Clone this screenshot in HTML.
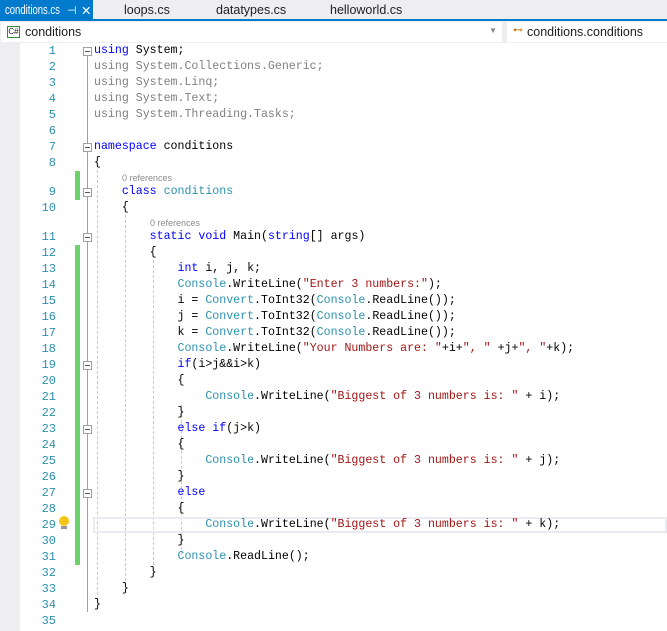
<!DOCTYPE html>
<html><head><style>
*{margin:0;padding:0;box-sizing:border-box}
body{width:667px;height:631px;overflow:hidden;background:#fff;position:relative;font-family:"Liberation Sans",sans-serif}
.tabs{position:absolute;left:0;top:0;width:667px;height:20px;background:#eeeef2;font-size:12.5px;color:#1e1e1e}
.tabs span{position:absolute;top:3px}
.tabbar{position:absolute;left:0;top:19px;width:667px;height:2px;background:#007acc}
.nav{position:absolute;left:0;top:21px;width:667px;height:22px;background:#eeeef2}
.box{position:absolute;top:1px;height:20px;background:#fff;font-size:12.5px;color:#1e1e1e;padding:3px 0 0 24px}
.gut{position:absolute;left:0;top:43px;width:20px;height:588px;background:#eeeef2}
.ln{position:absolute;left:20px;width:36px;text-align:right;font-family:"Liberation Mono",monospace;font-size:12px;color:#2b91af;line-height:16px}
.c{position:absolute;left:94px;white-space:pre;font-family:"Liberation Mono",monospace;font-size:11.6px;line-height:16px;color:#000}
.k{color:#0000ff}.t{color:#2b91af}.s{color:#a31515}.g{color:#808080}
.ref{position:absolute;font-size:9px;color:#8c8c8c;line-height:12px}
.gr{position:absolute;left:75px;width:5px;background:#6bd36b}
.fb{position:absolute;left:83px;width:9px;height:9px;border:1px solid #a0a0a0;background:#fff}
.fb:after{content:"";position:absolute;left:1px;top:3px;width:5px;height:1px;background:#555}
.guide{position:absolute;width:0;border-left:1px dashed #c8c8c8}
</style></head><body>
<div class="tabs">
<div style="position:absolute;left:0;top:0;width:93px;height:20px;background:#007acc"></div>
<span style="left:5px;color:#fff;transform:scaleX(0.76);transform-origin:0 0;white-space:nowrap">conditions.cs</span>
<span style="left:67px;color:#fff;font-size:11px;top:4px">⊣</span>
<span style="left:81px;color:#fff">✕</span>
<span style="left:124px">loops.cs</span>
<span style="left:216px">datatypes.cs</span>
<span style="left:330px">helloworld.cs</span>
</div>
<div class="tabbar"></div>
<div class="nav">
<div class="box" style="left:1px;width:501px"><span style="position:absolute;left:6px;top:4px;width:13px;height:12px;border:1px solid #388a34;font-size:8px;line-height:10px;text-align:center;color:#222">C#</span>conditions<span style="position:absolute;right:5px;top:4px;font-size:8px;color:#888">▼</span></div>
<div class="box" style="left:507px;width:160px;padding-left:20px"><span style="position:absolute;left:6px;top:3px;font-size:10px;color:#c27d0e">⊷</span>conditions.conditions</div>
</div>
<div class="gut"></div>

<div class="gr" style="top:171px;height:29px"></div>
<div class="gr" style="top:245px;height:320px"></div>
<div style="position:absolute;left:87px;top:52px;width:1px;height:560px;background:#a0a0a0"></div>
<div class="guide" style="left:97px;top:170px;height:430px"></div>
<div class="guide" style="left:125px;top:215px;height:366px"></div>
<div class="guide" style="left:153px;top:260px;height:305px"></div>
<div class="guide" style="left:181px;top:405px;height:150px"></div>
<div style="position:absolute;left:93px;top:517px;width:574px;height:16px;border:2px solid #eaeaf2"></div>
<div style="position:absolute;left:59px;top:516px;width:10px;height:10px;border-radius:50%;background:#f5c518"></div>
<div style="position:absolute;left:61px;top:526px;width:6px;height:3px;background:#999"></div>

<div class="fb" style="top:47px"></div><div class="fb" style="top:143px"></div><div class="fb" style="top:188px"></div><div class="fb" style="top:233px"></div><div class="fb" style="top:361px"></div><div class="fb" style="top:425px"></div><div class="fb" style="top:489px"></div>

<div class="ref" style="left:122px;top:172px">0 references</div>
<div class="ref" style="left:150px;top:217px">0 references</div>

<div class="ln" style="top:43px">1</div><div class="c" style="top:43px"><span class="k">using</span> System;</div>
<div class="ln" style="top:59px">2</div><div class="c g" style="top:59px">using System.Collections.Generic;</div>
<div class="ln" style="top:75px">3</div><div class="c g" style="top:75px">using System.Linq;</div>
<div class="ln" style="top:91px">4</div><div class="c g" style="top:91px">using System.Text;</div>
<div class="ln" style="top:107px">5</div><div class="c g" style="top:107px">using System.Threading.Tasks;</div>
<div class="ln" style="top:123px">6</div>
<div class="ln" style="top:139px">7</div><div class="c" style="top:139px"><span class="k">namespace</span> conditions</div>
<div class="ln" style="top:155px">8</div><div class="c" style="top:155px">{</div>
<div class="ln" style="top:184px">9</div><div class="c" style="top:184px">    <span class="k">class</span> <span class="t">conditions</span></div>
<div class="ln" style="top:200px">10</div><div class="c" style="top:200px">    {</div>
<div class="ln" style="top:229px">11</div><div class="c" style="top:229px">        <span class="k">static void</span> Main(<span class="k">string</span>[] args)</div>
<div class="ln" style="top:245px">12</div><div class="c" style="top:245px">        {</div>
<div class="ln" style="top:261px">13</div><div class="c" style="top:261px">            <span class="k">int</span> i, j, k;</div>
<div class="ln" style="top:277px">14</div><div class="c" style="top:277px">            <span class="t">Console</span>.WriteLine(<span class="s">"Enter 3 numbers:"</span>);</div>
<div class="ln" style="top:293px">15</div><div class="c" style="top:293px">            i = <span class="t">Convert</span>.ToInt32(<span class="t">Console</span>.ReadLine());</div>
<div class="ln" style="top:309px">16</div><div class="c" style="top:309px">            j = <span class="t">Convert</span>.ToInt32(<span class="t">Console</span>.ReadLine());</div>
<div class="ln" style="top:325px">17</div><div class="c" style="top:325px">            k = <span class="t">Convert</span>.ToInt32(<span class="t">Console</span>.ReadLine());</div>
<div class="ln" style="top:341px">18</div><div class="c" style="top:341px">            <span class="t">Console</span>.WriteLine(<span class="s">"Your Numbers are: "</span>+i+<span class="s">", "</span> +j+<span class="s">", "</span>+k);</div>
<div class="ln" style="top:357px">19</div><div class="c" style="top:357px">            <span class="k">if</span>(i&gt;j&amp;&amp;i&gt;k)</div>
<div class="ln" style="top:373px">20</div><div class="c" style="top:373px">            {</div>
<div class="ln" style="top:389px">21</div><div class="c" style="top:389px">                <span class="t">Console</span>.WriteLine(<span class="s">"Biggest of 3 numbers is: "</span> + i);</div>
<div class="ln" style="top:405px">22</div><div class="c" style="top:405px">            }</div>
<div class="ln" style="top:421px">23</div><div class="c" style="top:421px">            <span class="k">else if</span>(j&gt;k)</div>
<div class="ln" style="top:437px">24</div><div class="c" style="top:437px">            {</div>
<div class="ln" style="top:453px">25</div><div class="c" style="top:453px">                <span class="t">Console</span>.WriteLine(<span class="s">"Biggest of 3 numbers is: "</span> + j);</div>
<div class="ln" style="top:469px">26</div><div class="c" style="top:469px">            }</div>
<div class="ln" style="top:485px">27</div><div class="c" style="top:485px">            <span class="k">else</span></div>
<div class="ln" style="top:501px">28</div><div class="c" style="top:501px">            {</div>
<div class="ln" style="top:517px">29</div><div class="c" style="top:517px">                <span class="t">Console</span>.WriteLine(<span class="s">"Biggest of 3 numbers is: "</span> + k);</div>
<div class="ln" style="top:533px">30</div><div class="c" style="top:533px">            }</div>
<div class="ln" style="top:549px">31</div><div class="c" style="top:549px">            <span class="t">Console</span>.ReadLine();</div>
<div class="ln" style="top:565px">32</div><div class="c" style="top:565px">        }</div>
<div class="ln" style="top:581px">33</div><div class="c" style="top:581px">    }</div>
<div class="ln" style="top:597px">34</div><div class="c" style="top:597px">}</div>
<div class="ln" style="top:613px">35</div>
</body></html>
